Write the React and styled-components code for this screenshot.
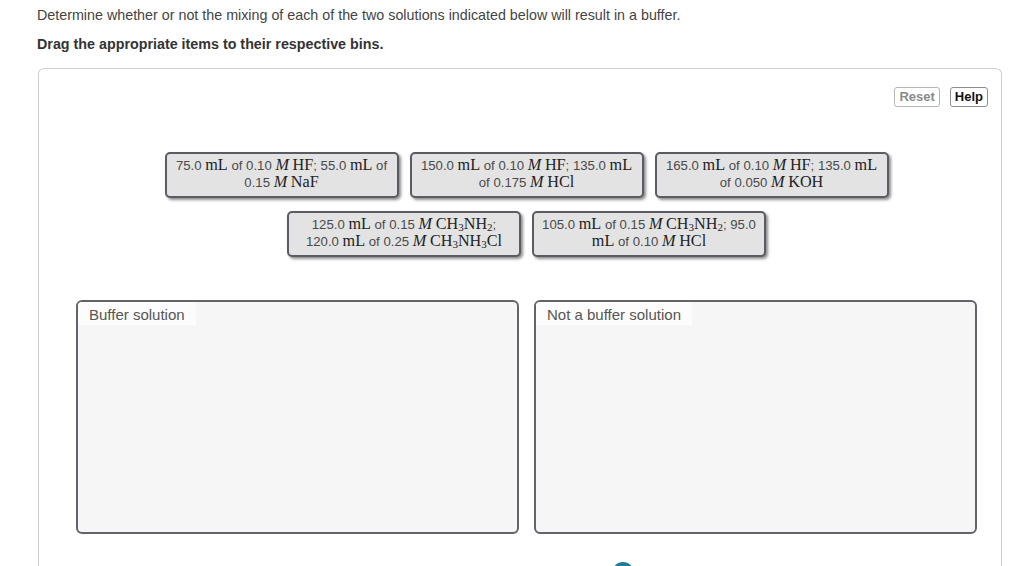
import React from "react"
import styled, { createGlobalStyle } from "styled-components"

const GlobalStyle = createGlobalStyle`
  html, body {
    margin: 0;
    padding: 0;
    background: #fff;
    overflow: hidden;
  }
  body {
    font-family: Arial, "Liberation Sans", sans-serif;
    color: #333;
  }
`;

const Page = styled.div`
  padding: 7px 22px 0 37px;
  height: 566px;
  box-sizing: border-box;
`;

const Prompt = styled.p`
  margin: 0;
  font-size: 14.3px;
  line-height: 17px;
  color: #444;
`;

const Instruction = styled.p`
  margin: 12px 0 0;
  font-size: 14.3px;
  line-height: 17px;
  font-weight: bold;
  color: #333;
`;

const Panel = styled.div`
  margin: 15px 0 0 1px;
  width: 964px;
  height: 560px;
  box-sizing: border-box;
  border: 1px solid #cfcfcf;
  border-bottom: none;
  border-radius: 6px 6px 0 0;
  padding: 18px 13px 0 26px;
`;

const Toolbar = styled.div`
  display: flex;
  justify-content: flex-end;
  gap: 10px;
`;

const ToolButton = styled.button`
  font-family: Arial, "Liberation Sans", sans-serif;
  font-size: 13px;
  font-weight: bold;
  line-height: 16px;
  padding: 1px 4px;
  height: 20px;
  background: #fff;
  border: 1px solid ${p => (p.$disabled ? "#b5b5b5" : "#8e8e8e")};
  border-radius: 3px;
  color: ${p => (p.$disabled ? "#8a8a8a" : "#111")};
  cursor: pointer;
`;

const Items = styled.div`
  margin-top: 45px;
  display: flex;
  flex-direction: column;
  align-items: center;
  gap: 13px;
`;

const ItemRow = styled.div`
  display: flex;
  gap: 11px;
`;

const Item = styled.div`
  width: 234px;
  height: 46px;
  box-sizing: border-box;
  border: 2px solid #5b5b63;
  border-radius: 5px;
  background: #e3e3e3;
  box-shadow: 2px 2px 3px rgba(0, 0, 0, 0.45);
  display: flex;
  flex-direction: column;
  align-items: center;
  justify-content: center;
  text-align: center;
  font-size: 13.2px;
  color: #4a4a4a;
  padding-bottom: 2px;
`;

const Line = styled.span`
  display: block;
  line-height: 16px;
  white-space: nowrap;
`;

const Math = styled.span`
  font-family: "Liberation Serif", "Times New Roman", serif;
  font-size: 16.2px;
  font-style: ${p => (p.$italic ? "italic" : "normal")};
  color: #222;
`;

const Sub = styled.sub`
  font-size: 11px;
  line-height: 0;
  vertical-align: -2px;
`;

const Bins = styled.div`
  margin: 43px 11px 0;
  display: grid;
  grid-template-columns: 1fr 1fr;
  gap: 15px;
`;

const Bin = styled.div`
  height: 234px;
  box-sizing: border-box;
  border: 2px solid #63636b;
  border-radius: 6px;
  background: #f6f6f6;
`;

const BinLabel = styled.div`
  display: inline-block;
  background: #fcfcfc;
  color: #555;
  font-size: 15px;
  line-height: 17px;
  padding: 4px 11px 2px 11px;
  border-top-left-radius: 4px;
`;

const Footer = styled.div`
  display: flex;
  padding-left: 547px;
  margin-top: 28px;
`;

const Dot = styled.div`
  width: 22px;
  height: 22px;
  border-radius: 50%;
  background: #1c7f98;
`;

const M = ({ children }) => <Math $italic>{children}</Math>;
const T = ({ children }) => <Math>{children}</Math>;

const items = [
  [
    {
      id: 1,
      lines: [
        <>75.0 <T>mL</T> of 0.10 <M>M</M> <T>HF</T>; 55.0 <T>mL</T> of</>,
        <>0.15 <M>M</M> <T>NaF</T></>,
      ],
    },
    {
      id: 2,
      lines: [
        <>150.0 <T>mL</T> of 0.10 <M>M</M> <T>HF</T>; 135.0 <T>mL</T></>,
        <>of 0.175 <M>M</M> <T>HCl</T></>,
      ],
    },
    {
      id: 3,
      lines: [
        <>165.0 <T>mL</T> of 0.10 <M>M</M> <T>HF</T>; 135.0 <T>mL</T></>,
        <>of 0.050 <M>M</M> <T>KOH</T></>,
      ],
    },
  ],
  [
    {
      id: 4,
      lines: [
        <>125.0 <T>mL</T> of 0.15 <M>M</M> <T>CH<Sub>3</Sub>NH<Sub>2</Sub></T>;</>,
        <>120.0 <T>mL</T> of 0.25 <M>M</M> <T>CH<Sub>3</Sub>NH<Sub>3</Sub>Cl</T></>,
      ],
    },
    {
      id: 5,
      lines: [
        <>105.0 <T>mL</T> of 0.15 <M>M</M> <T>CH<Sub>3</Sub>NH<Sub>2</Sub></T>; 95.0</>,
        <><T>mL</T> of 0.10 <M>M</M> <T>HCl</T></>,
      ],
    },
  ],
];

const App = () => (
  <>
    <GlobalStyle />
    <Page>
      <Prompt>
        Determine whether or not the mixing of each of the two solutions indicated below will result in a buffer.
      </Prompt>
      <Instruction>Drag the appropriate items to their respective bins.</Instruction>
      <Panel>
        <Toolbar>
          <ToolButton $disabled>Reset</ToolButton>
          <ToolButton>Help</ToolButton>
        </Toolbar>
        <Items>
          {items.map((row, i) => (
            <ItemRow key={i}>
              {row.map(item => (
                <Item key={item.id}>
                  {item.lines.map((l, j) => (
                    <Line key={j}>{l}</Line>
                  ))}
                </Item>
              ))}
            </ItemRow>
          ))}
        </Items>
        <Bins>
          <Bin>
            <BinLabel>Buffer solution</BinLabel>
          </Bin>
          <Bin>
            <BinLabel>Not a buffer solution</BinLabel>
          </Bin>
        </Bins>
        <Footer>
          <Dot />
        </Footer>
      </Panel>
    </Page>
  </>
)

export default App
